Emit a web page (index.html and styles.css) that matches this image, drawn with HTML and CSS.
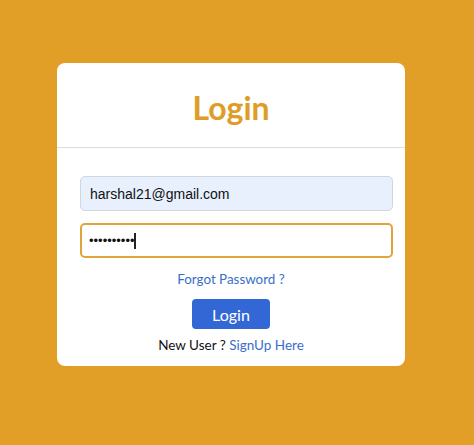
FILE: index.html
```html
<!DOCTYPE html>
<html>
<head>
<meta charset="utf-8">
<link rel="stylesheet" href="styles.css">
</head>
<body>
<div class="card">
  <div class="card-header">
    <h1 class="title">Login</h1>
  </div>
  <form class="card-body">
    <input class="field field-filled" type="text" value="harshal21@gmail.com">
    <div class="field-wrap">
      <input class="field field-focus" type="password" value="1234567890">
      <span class="caret"></span>
    </div>
    <a class="link forgot" href="#">Forgot Password ?</a>
    <button class="btn" type="button">Login</button>
    <p class="signup">New User ? <a class="link" href="#">SignUp Here</a></p>
  </form>
</div>
</body>
</html>
```
FILE: styles.css
```css
html, body {
  margin: 0;
  padding: 0;
}
body {
  background: #e19f27;
  width: 474px;
  height: 445px;
  overflow: hidden;
  font-family: Lato, "Open Sans", sans-serif;
}
.card {
  margin: 63px 0 0 57px;
  width: 348px;
  height: 303px;
  background: #fff;
  border-radius: 8px;
  box-sizing: border-box;
}
.card-header {
  height: 84px;
  border-bottom: 1px solid #dcdcdc;
  display: flex;
  align-items: center;
  justify-content: center;
}
.title {
  margin: 0;
  color: #e09c27;
  font-size: 32px;
  font-weight: 700;
  line-height: 1;
  padding-top: 6px;
}
.card-body {
  margin: 0;
  padding-top: 28px;
  display: flex;
  flex-direction: column;
  align-items: center;
}
.field {
  display: block;
  box-sizing: border-box;
  width: 313px;
  height: 35px;
  margin: 0;
  padding: 0 9px;
  font-family: "Liberation Sans", Arial, sans-serif;
  font-size: 14px;
  color: #111;
  border-radius: 5px;
  outline: none;
}
.field-filled {
  align-self: flex-start;
  margin-left: 23px;
  background: #e8f0fe;
  border: 1px solid #cfd6e0;
}
.field-wrap {
  position: relative;
  align-self: flex-start;
  margin-left: 23px;
  margin-top: 12px;
}
.field-focus {
  background: #fff;
  border: 2px solid #e2a43a;
  padding: 0 7px;
  font-size: 13px;
  letter-spacing: 0;
}
.caret {
  position: absolute;
  left: 54px;
  top: 10px;
  width: 2px;
  height: 16px;
  background: #222;
}
.link {
  color: #3a6ec8;
  text-decoration: none;
}
.forgot {
  margin-top: 12px;
  font-size: 13.4px;
  line-height: 18px;
}
.btn {
  margin-top: 11px;
  width: 78px;
  height: 30px;
  border: none;
  border-radius: 4px;
  background: #3367d6;
  color: #fff;
  font-family: Lato, "Open Sans", sans-serif;
  font-size: 16px;
  padding: 0;
}
.signup {
  margin: 7px 0 0;
  font-size: 13.5px;
  line-height: 18px;
  color: #111;
}
```
